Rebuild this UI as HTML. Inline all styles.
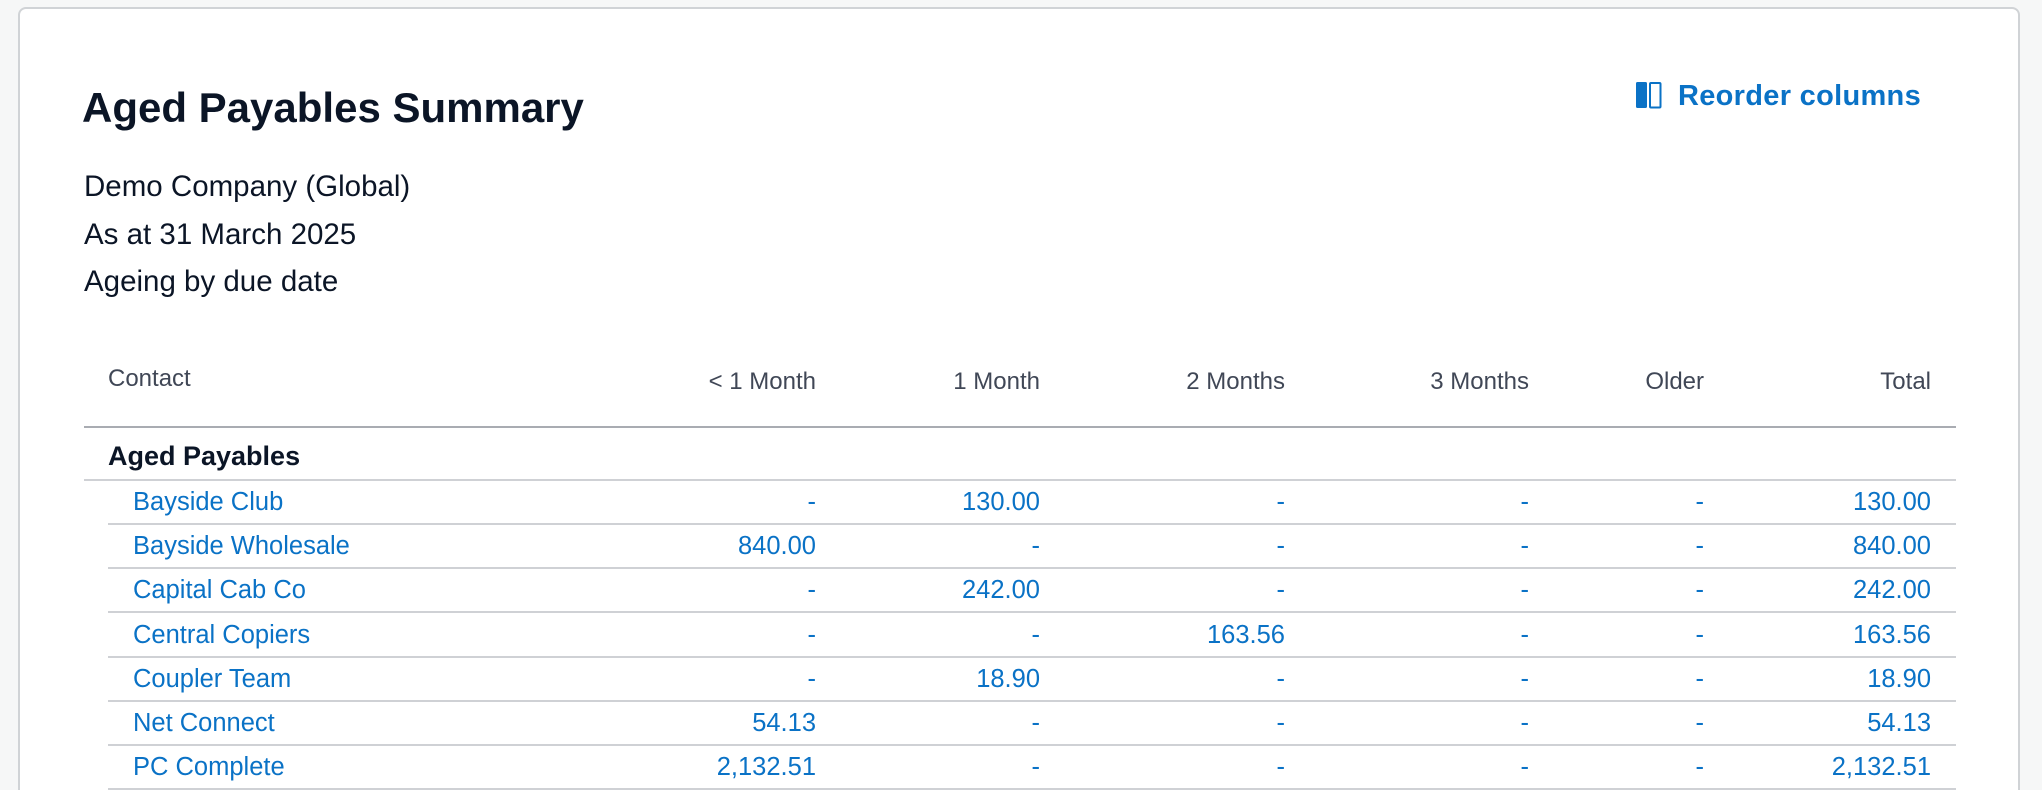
<!DOCTYPE html>
<html style="height:790px;overflow:hidden"><head><meta charset="utf-8"><style>
body{margin:0;width:2042px;height:790px;background:#f6f7f7;font-family:"Liberation Sans",Arial,sans-serif;overflow:hidden;position:relative}
.card{position:absolute;left:18px;top:7px;width:2002px;height:783px;background:#fff;border:2px solid #d0d3d6;border-bottom:none;border-radius:8px 8px 0 0;box-sizing:border-box}
.a{position:absolute;white-space:nowrap;line-height:1}
.t{color:#0b1526;font-weight:bold;font-size:42px}
.m{color:#0b1526;font-size:29.5px}
.h{color:#404756;font-size:24px}
.r{text-align:right}
.l{color:#0a72c6;font-size:25.5px}
.line{position:absolute;height:2px;background:#cfd1d5}
</style></head><body>
<div class="card"></div>
<div class="a t" style="left:82px;top:87px">Aged Payables Summary</div>
<svg class="a" style="left:1636px;top:82px" width="26" height="27" viewBox="0 0 26 27"><rect x="0" y="0" width="11" height="26" rx="1.5" fill="#0a72c6"/><rect x="14" y="1" width="10.5" height="24.5" rx="1" fill="none" stroke="#0a72c6" stroke-width="2"/></svg>
<div class="a" style="left:1678px;top:82px;font-size:29px;font-weight:bold;color:#0a72c6;letter-spacing:0.3px">Reorder columns</div>
<div class="a m" style="left:84px;top:172px">Demo Company (Global)</div>
<div class="a m" style="left:84px;top:220px">As at 31 March 2025</div>
<div class="a m" style="left:84px;top:267px">Ageing by due date</div>
<div class="a h" style="left:108px;top:367px">Contact</div>
<div class="a h r" style="right:1226px;top:370px">&lt; 1 Month</div>
<div class="a h r" style="right:1002px;top:370px">1 Month</div>
<div class="a h r" style="right:757px;top:370px">2 Months</div>
<div class="a h r" style="right:513px;top:370px">3 Months</div>
<div class="a h r" style="right:338px;top:370px">Older</div>
<div class="a h r" style="right:111px;top:370px">Total</div>
<div class="line" style="left:84px;width:1872px;top:426px;background:#a9acb2"></div>
<div class="a" style="left:108px;top:443px;font-size:27px;font-weight:bold;color:#0b1526">Aged Payables</div>
<div class="line" style="left:84px;width:1872px;top:479px"></div>
<div id="rows"></div>
<script>
var d=[["Bayside Club","-","130.00","-","-","-","130.00"],["Bayside Wholesale","840.00","-","-","-","-","840.00"],["Capital Cab Co","-","242.00","-","-","-","242.00"],["Central Copiers","-","-","163.56","-","-","163.56"],["Coupler Team","-","18.90","-","-","-","18.90"],["Net Connect","54.13","-","-","-","-","54.13"],["PC Complete","2,132.51","-","-","-","-","2,132.51"]];
var R=[1226,1002,757,513,338,111],h="";
d.forEach(function(r,i){var y=490+i*44.2;h+='<div class="a l" style="left:133px;top:'+y+'px">'+r[0]+'</div>';for(var j=1;j<7;j++)h+='<div class="a l r" style="right:'+R[j-1]+'px;top:'+y+'px">'+r[j]+'</div>';h+='<div class="line" style="left:108px;width:1848px;top:'+(523+i*44.2)+'px"></div>';});
document.getElementById("rows").innerHTML=h;
</script>
</body></html>
